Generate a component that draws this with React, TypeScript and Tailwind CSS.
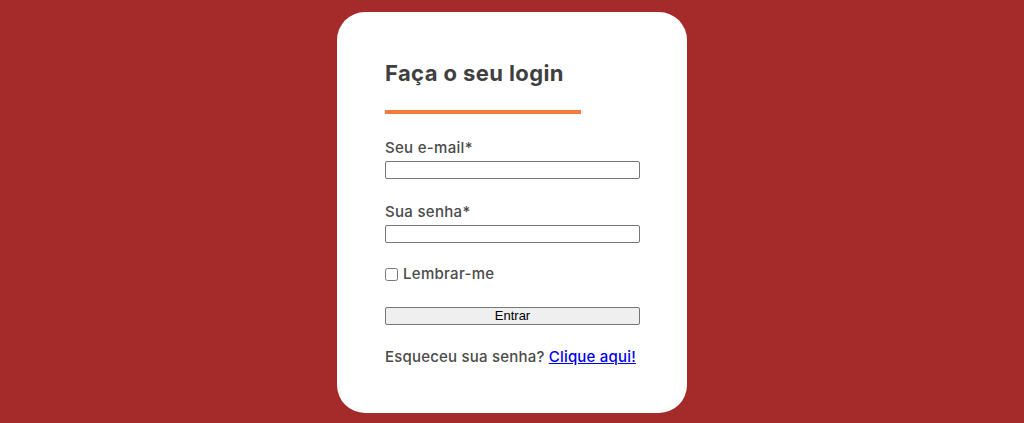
import { useState } from 'react';

const Login = () => {
  const [remember, setRemember] = useState(false);

  return (
    <div className="min-h-[423px] w-full bg-[#a52a2a] flex justify-center pt-[12px] pb-[10px] font-['Inter','Noto_Sans',sans-serif] text-[#444]">
      <div className="w-[350px] h-[401px] bg-white rounded-[28px] px-[48px] pt-[46px]">
        <h1 className="text-[22px] leading-[30px] font-bold text-[#3f3f3f] tracking-[0.4px]">Faça o seu login</h1>
        <div className="mt-[22px] h-[4px] w-[196px] bg-[#f47b3e]" />
        <form className="flex flex-col" onSubmit={e => e.preventDefault()}>
          <label className="mt-[24px] text-[15px] leading-[20px] font-medium tracking-[0.3px] text-[#4a4a4a]">Seu e-mail*</label>
          <input
            type="email"
            className="mt-[3px] h-[18px] w-[255px] border border-[#767676] rounded-[2px] bg-white px-1 text-[13px]"
          />
          <label className="mt-[23px] text-[15px] leading-[20px] font-medium tracking-[0.3px] text-[#4a4a4a]">Sua senha*</label>
          <input
            type="password"
            className="mt-[3px] h-[18px] w-[255px] border border-[#767676] rounded-[2px] bg-white px-1 text-[13px]"
          />
          <label className="mt-[23px] flex items-center h-[16px] text-[15px] font-medium tracking-[0.3px] text-[#4a4a4a]">
            <input
              type="checkbox"
              checked={remember}
              onChange={() => setRemember(!remember)}
              className="w-[13px] h-[13px] mr-[5px] ml-0"
            />
            Lembrar-me
          </label>
          <button
            type="submit"
            className="mt-[25px] h-[18px] w-[255px] border border-[#767676] rounded-[2px] bg-[#efefef] text-[13px] leading-[16px] text-black font-['Liberation_Sans',Arial,sans-serif]"
          >
            Entrar
          </button>
          <p className="mt-[22px] whitespace-nowrap text-[15px] leading-[20px] font-medium tracking-[0.2px] text-[#4a4a4a]">
            Esqueceu sua senha? <a href="#" className="text-[#0000ee] underline">Clique aqui!</a>
          </p>
        </form>
      </div>
    </div>
  );
};

export default function App() {
  return <Login />;
}
